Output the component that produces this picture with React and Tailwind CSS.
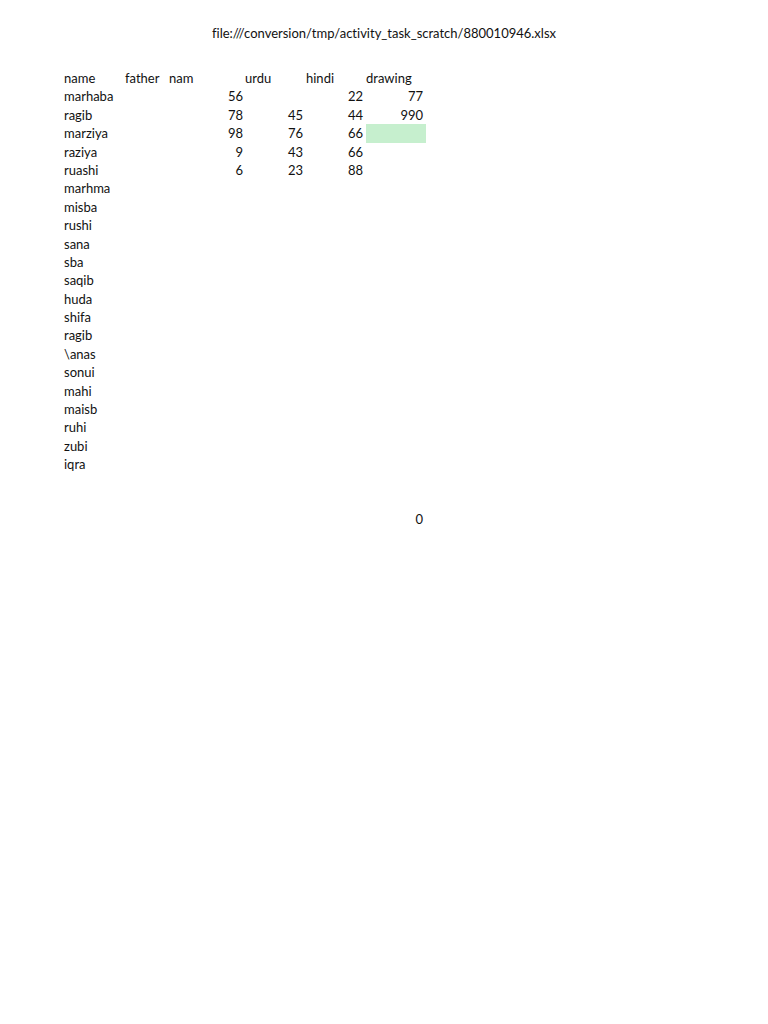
import React from "react";

const rows = [
  ["marhaba", "56", "", "22", "77"],
  ["ragib", "78", "45", "44", "990"],
  ["marziya", "98", "76", "66", "", true],
  ["raziya", "9", "43", "66", ""],
  ["ruashi", "6", "23", "88", ""],
  ["marhma"],
  ["misba"],
  ["rushi"],
  ["sana"],
  ["sba"],
  ["saqib"],
  ["huda"],
  ["shifa"],
  ["ragib"],
  ["\\anas"],
  ["sonui"],
  ["mahi"],
  ["maisb"],
  ["ruhi"],
  ["zubi"],
  ["iqra"],
];

const grid = "grid grid-cols-[61px_44px_80px_61px_60px_60px] h-[18.4px] leading-[18.4px] whitespace-nowrap";

export default function App() {
  return (
    <div className="w-[768px] h-[1024px] bg-white text-[#111] text-[13px] font-['Lato','Carlito',sans-serif] [font-variant-ligatures:none]">
      <div className="pt-[24px] h-[69px] text-center">
        file:///conversion/tmp/activity_task_scratch/880010946.xlsx
      </div>

      <div className="pl-[60px]">
        {/* header */}
        <div className={grid}>
          <div className="pl-[4px]">name</div>
          <div className="pl-[4px]">father</div>
          <div className="pl-[4px]">nam</div>
          <div>urdu</div>
          <div>hindi</div>
          <div>drawing</div>
        </div>

        {rows.map((r, i) => (
          <div key={i} className={grid}>
            <div className="pl-[4px]">{r[0]}</div>
            <div></div>
            <div className="text-right pr-[2px]">{r[1]}</div>
            <div className="text-right pr-[3px]">{r[2]}</div>
            <div className="text-right pr-[3px]">{r[3]}</div>
            <div className={`text-right pr-[3px] ${r[5] ? "bg-[#c6efce]" : ""}`}>
              {r[4]}
            </div>
          </div>
        ))}

        <div className="h-[36.8px]"></div>
        <div className={grid}>
          <div></div>
          <div></div>
          <div></div>
          <div></div>
          <div></div>
          <div className="text-right pr-[3px]">0</div>
        </div>
      </div>
    </div>
  );
}
